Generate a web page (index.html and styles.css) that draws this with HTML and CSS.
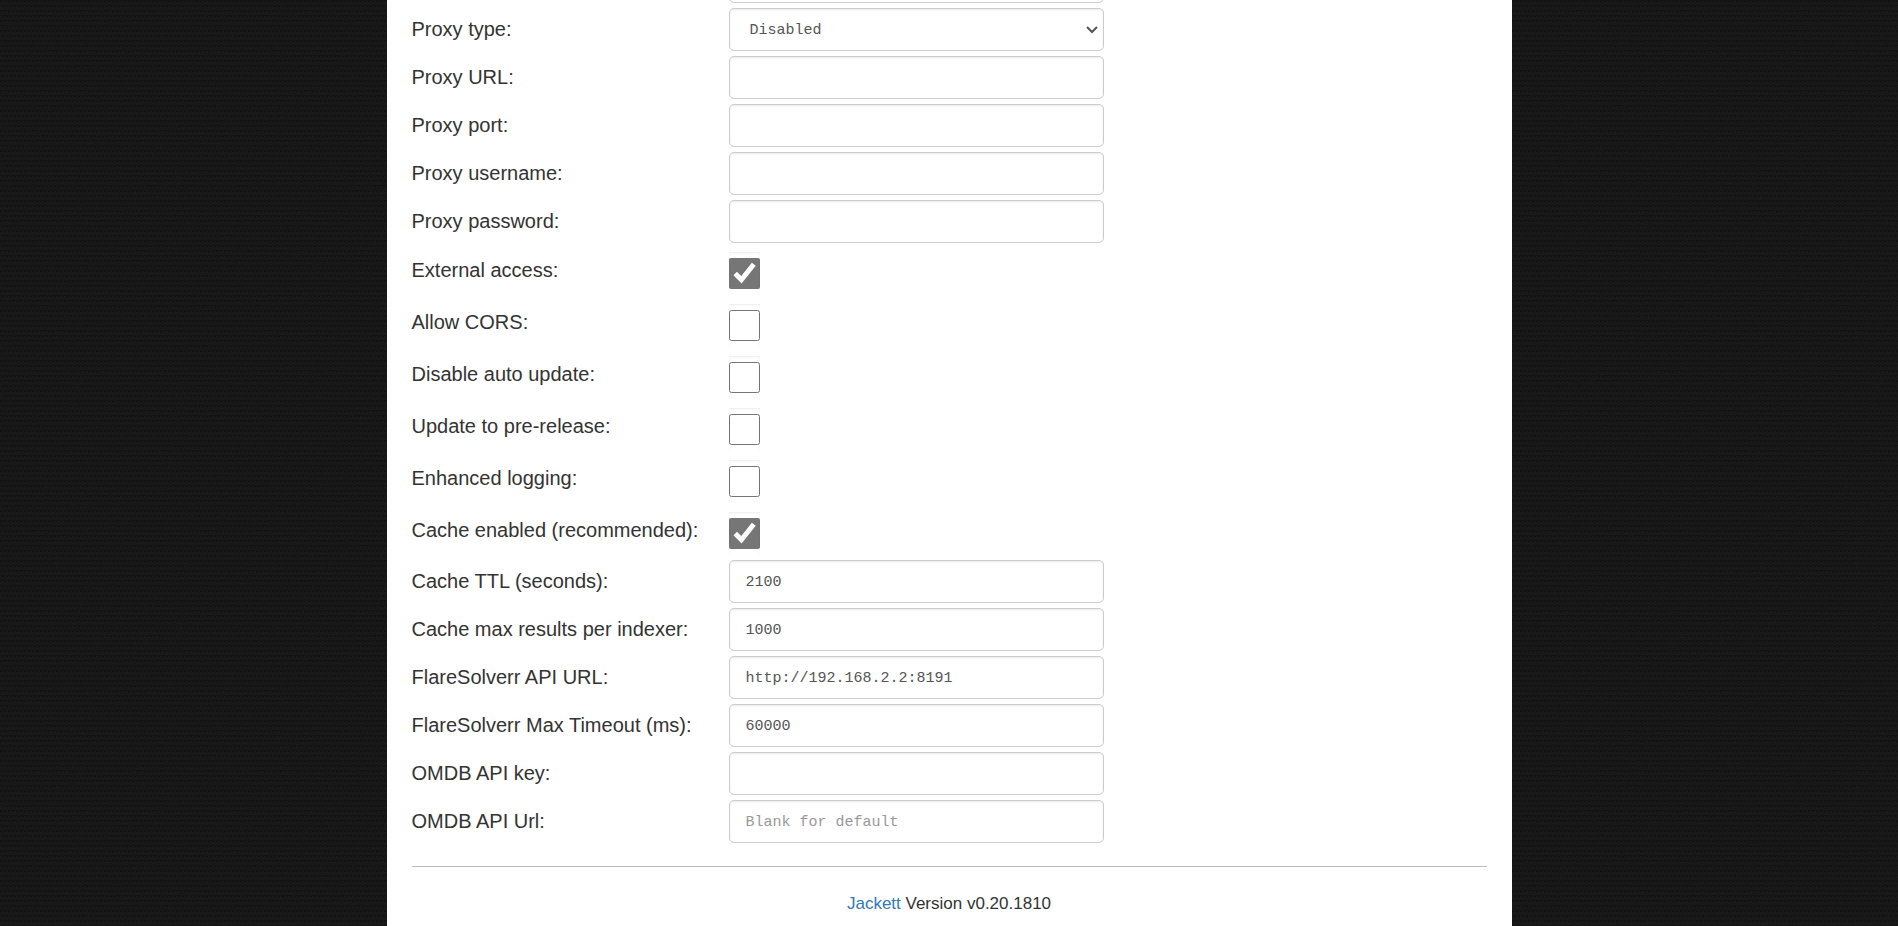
FILE: index.html
```html
<!DOCTYPE html>
<html lang="en">
  <head>
    <meta charset="UTF-8" />
    <meta name="viewport" content="width=device-width, initial-scale=1.0" />
    <title>Jackett</title>
    <link rel="stylesheet" href="styles.css">
  </head>
  <body>
    <div class="page">
      <form class="config">
        <div class="row">
          <input class="form-control unlabelled" type="text" id="basepath" aria-label="Base path override" />
        </div>
        <div class="row">
          <label for="proxy-type">Proxy type:</label>
          <select class="form-control" id="proxy-type">
            <option selected>Disabled</option>
            <option>HTTP</option>
            <option>SOCKS4</option>
            <option>SOCKS5</option>
          </select>
        </div>
        <div class="row">
          <label for="proxy-url">Proxy URL:</label>
          <input class="form-control" type="text" id="proxy-url" />
        </div>
        <div class="row">
          <label for="proxy-port">Proxy port:</label>
          <input class="form-control" type="text" id="proxy-port" />
        </div>
        <div class="row">
          <label for="proxy-username">Proxy username:</label>
          <input class="form-control" type="text" id="proxy-username" />
        </div>
        <div class="row">
          <label for="proxy-password">Proxy password:</label>
          <input class="form-control" type="password" id="proxy-password" />
        </div>

        <div class="row check">
          <label for="external">External access:</label>
          <input type="checkbox" id="external" checked />
        </div>
        <div class="row check">
          <label for="cors">Allow CORS:</label>
          <input type="checkbox" id="cors" />
        </div>
        <div class="row check">
          <label for="updates">Disable auto update:</label>
          <input type="checkbox" id="updates" />
        </div>
        <div class="row check">
          <label for="prerelease">Update to pre-release:</label>
          <input type="checkbox" id="prerelease" />
        </div>
        <div class="row check">
          <label for="logging">Enhanced logging:</label>
          <input type="checkbox" id="logging" />
        </div>
        <div class="row check">
          <label for="cache">Cache enabled (recommended):</label>
          <input type="checkbox" id="cache" checked />
        </div>

        <div class="row">
          <label for="cache-ttl">Cache TTL (seconds):</label>
          <input class="form-control" type="text" id="cache-ttl" value="2100" />
        </div>
        <div class="row">
          <label for="cache-max">Cache max results per indexer:</label>
          <input class="form-control" type="text" id="cache-max" value="1000" />
        </div>
        <div class="row">
          <label for="flaresolverr-url">FlareSolverr API URL:</label>
          <input class="form-control" type="text" id="flaresolverr-url" value="http://192.168.2.2:8191" />
        </div>
        <div class="row">
          <label for="flaresolverr-timeout">FlareSolverr Max Timeout (ms):</label>
          <input class="form-control" type="text" id="flaresolverr-timeout" value="60000" />
        </div>
        <div class="row">
          <label for="omdb-key">OMDB API key:</label>
          <input class="form-control" type="text" id="omdb-key" />
        </div>
        <div class="row">
          <label for="omdb-url">OMDB API Url:</label>
          <input class="form-control" type="text" id="omdb-url" placeholder="Blank for default" />
        </div>
      </form>
      <hr />
      <footer><a href="https://github.com/Jackett/Jackett">Jackett</a> Version v0.20.1810</footer>
    </div>
  </body>
</html>
```
FILE: styles.css
```css
* {
  box-sizing: border-box;
}
body {
  margin: 0;
  font-family: "Liberation Sans", Arial, sans-serif;
  font-size: 20px;
  line-height: 28px;
  color: #333;
  background-color: #141414;
  /* woven cloth: fine grain over staggered dark threads */
  background-image:
    url("data:image/svg+xml,%3Csvg xmlns='http://www.w3.org/2000/svg' width='225' height='225'%3E%3Cfilter id='n'%3E%3CfeTurbulence type='fractalNoise' baseFrequency='0.6' numOctaves='2' stitchTiles='stitch'/%3E%3CfeColorMatrix type='saturate' values='0'/%3E%3C/filter%3E%3Crect width='225' height='225' filter='url(%23n)' opacity='0.05'/%3E%3C/svg%3E"),
    url("data:image/svg+xml,%3Csvg xmlns='http://www.w3.org/2000/svg' width='8' height='10'%3E%3Cpath d='M0 0h8v1H0zM0 5h8v1H0z' fill='%23000' opacity='.25'/%3E%3Cpath d='M0 1h2v1H0zM4 1h2v1H4zM2 6h2v1H2zM6 6h2v1H6z' fill='%23000' opacity='.4'/%3E%3C/svg%3E");
  overflow: hidden;
}
.page {
  max-width: 1125px;
  margin: -40px auto 0;
  padding: 0 25px 20px;
  background: #fff;
}
.config {
  display: flex;
  flex-direction: column;
  gap: 5px;
}
.row {
  display: grid;
  grid-template-columns: 317px minmax(0, 375px);
  align-items: start;
}
label {
  padding-top: 7px;
}
.form-control {
  width: 100%;
  height: 43px;
  padding: 2px 16px 0;
  border: 1px solid #ccc;
  border-radius: 5px;
  background: #fff;
  box-shadow: inset 0 1px 2px rgba(0, 0, 0, 0.08);
  font-family: "Liberation Mono", monospace;
  font-size: 15px;
  color: #555;
}
.unlabelled {
  grid-column: 2;
}
select.form-control {
  appearance: none;
  padding: 2px 20px 0;
  background: #fff url("data:image/svg+xml,%3Csvg xmlns='http://www.w3.org/2000/svg' width='12' height='8' viewBox='0 0 12 8'%3E%3Cpath d='M1 1l5 5 5-5' fill='none' stroke='%23555' stroke-width='2'/%3E%3C/svg%3E") no-repeat right 5px center;
}
.form-control::placeholder {
  color: #999;
}
.check {
  margin-top: 4px;
}
.check label {
  padding-top: 4px;
}
.check input {
  width: 31px;
  height: 43px;
  margin: 0;
  accent-color: #767676;
  box-shadow: inset 0 1px 2px rgba(0, 0, 0, 0.08);
}
hr {
  margin: 23px 0 24px;
  border: 0;
  border-top: 1px solid #bbb;
}
footer {
  font-size: 17px;
  line-height: 26px;
  text-align: center;
}
a {
  color: #337ab7;
  text-decoration: none;
}
```
